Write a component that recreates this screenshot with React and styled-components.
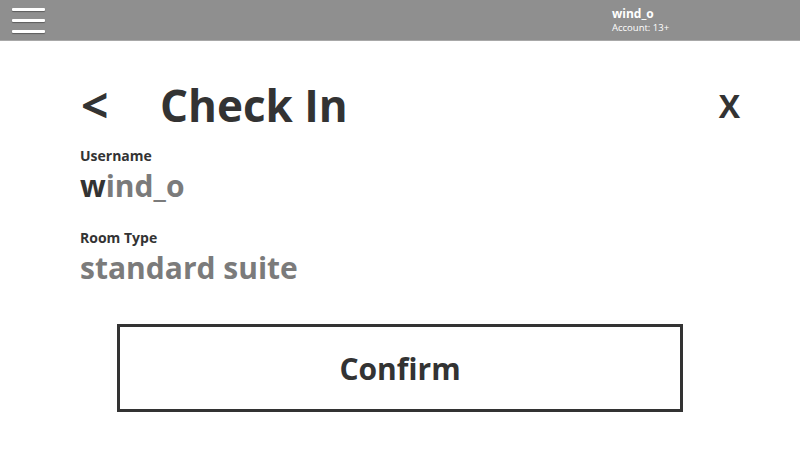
import React from "react";
import styled, { createGlobalStyle } from "styled-components";

const Global = createGlobalStyle`
  html, body { margin: 0; padding: 0; background: #fff; }
  body { font-family: "Open Sans", "Noto Sans", sans-serif; width: 800px; height: 450px; overflow: hidden; }
`;

const TopBar = styled.header`
  height: 41px;
  background: #8f8f8f;
  border-bottom: 1px solid #a8a8a8;
  display: flex;
  align-items: center;
  justify-content: space-between;
  box-sizing: border-box;
  padding: 0 0 0 12px;
`;

const Burger = styled.div`
  display: flex;
  flex-direction: column;
  gap: 8px;
  width: 33px;
`;

const BurgerLine = styled.span`
  display: block;
  height: 3px;
  background: #fff;
  border-radius: 1px;
  box-shadow: 0 1px 1px rgba(0,0,0,0.35);
`;

const Account = styled.div`
  width: 188px;
  display: flex;
  flex-direction: column;
  gap: 1px;
  color: #fff;
  margin-top: -1px;
`;

const AccountName = styled.span`
  font-size: 12px;
  font-weight: 700;
  line-height: 14px;
`;

const AccountAge = styled.span`
  font-size: 9.5px;
  line-height: 11px;
`;

const Main = styled.main`
  padding: 42px 60px 0 80px;
  display: flex;
  flex-direction: column;
`;

const TitleRow = styled.div`
  display: flex;
  align-items: center;
  height: 44px;
  color: #333;
`;

const Back = styled.span`
  font-size: 48px;
  font-weight: 700;
  width: 80px;
  padding-left: 1px;
  line-height: 1;
`;

const Title = styled.h1`
  margin: 0;
  font-size: 44px;
  font-weight: 700;
  flex: 1;
  margin-left: -1px;
`;

const Close = styled.span`
  font-size: 32px;
  font-weight: 700;
`;

const Field = styled.div`
  display: flex;
  flex-direction: column;
  margin-top: ${p => p.$top}px;
`;

const Label = styled.label`
  font-size: 14px;
  font-weight: 700;
  color: #333;
  line-height: 18px;
`;

const Value = styled.div`
  font-size: 30px;
  font-weight: 700;
  color: #7b7b7b;
  line-height: 36px;
  margin-top: 3px;
`;

const Typed = styled.span`
  color: #333;
`;

const ConfirmButton = styled.button`
  margin: 38px 0 0 37px;
  width: 566px;
  height: 88px;
  border: 3px solid #333;
  background: #fff;
  font-family: inherit;
  font-size: 30px;
  font-weight: 700;
  color: #333;
  cursor: pointer;
`;

export default function App() {
  return (
    <>
      <Global />
      <TopBar>
        <Burger>
          <BurgerLine />
          <BurgerLine />
          <BurgerLine />
        </Burger>
        <Account>
          <AccountName>wind_o</AccountName>
          <AccountAge>Account: 13+</AccountAge>
        </Account>
      </TopBar>
      <Main>
        <TitleRow>
          <Back>&lt;</Back>
          <Title>Check In</Title>
          <Close>X</Close>
        </TitleRow>
        <Field $top={20}>
          <Label>Username</Label>
          <Value><Typed>w</Typed>ind_o</Value>
        </Field>
        <Field $top={25}>
          <Label>Room Type</Label>
          <Value>standard suite</Value>
        </Field>
        <ConfirmButton>Confirm</ConfirmButton>
      </Main>
    </>
  );
}
